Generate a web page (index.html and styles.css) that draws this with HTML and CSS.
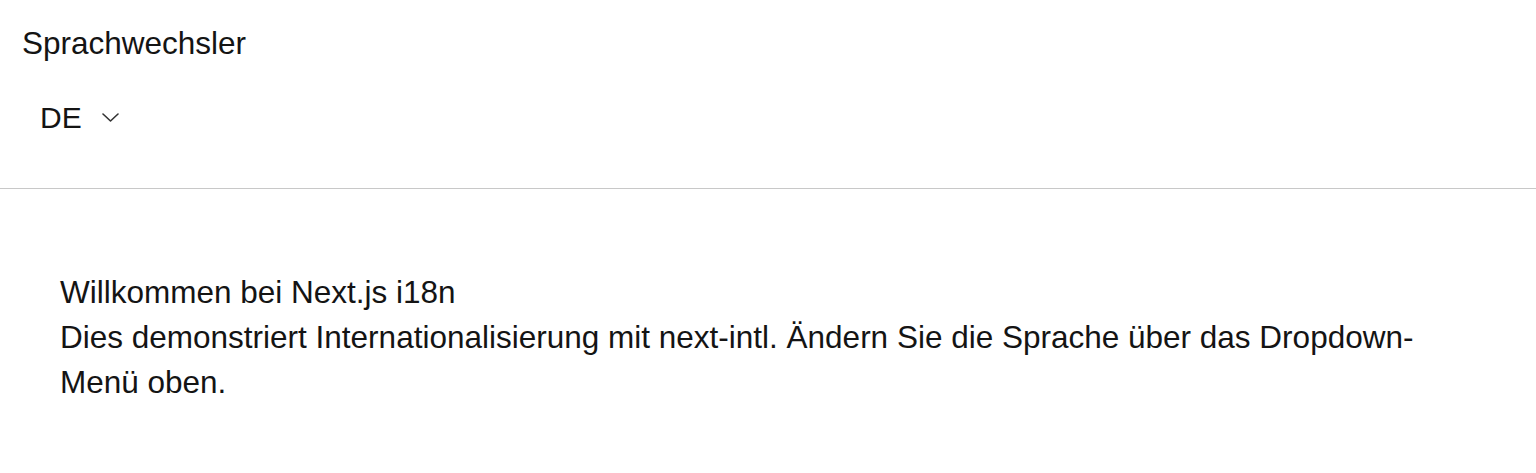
FILE: index.html
```html
<!DOCTYPE html>
<html lang="de">
<head>
<meta charset="utf-8">
<title>Next.js i18n</title>
<link rel="stylesheet" href="styles.css">
</head>
<body>
<header class="topbar">
  <div class="topbar-title">Sprachwechsler</div>
  <button class="lang-select" type="button">
    <span class="lang-code">DE</span>
    <svg class="chevron" width="17" height="9" viewBox="0 0 17 9" aria-hidden="true">
      <path d="M1 1 L8.5 8 L16 1" fill="none" stroke="#333" stroke-width="1.6" stroke-linecap="round" stroke-linejoin="round"/>
    </svg>
  </button>
</header>
<main class="content">
  <div class="welcome">Willkommen bei Next.js i18n</div>
  <p class="intro">Dies demonstriert Internationalisierung mit next-intl. Ändern Sie die Sprache über das Dropdown-Menü oben.</p>
</main>
</body>
</html>
```
FILE: styles.css
```css
* { box-sizing: border-box; }
html, body {
  margin: 0;
  padding: 0;
  background: #ffffff;
}
body {
  font-family: "Liberation Sans", Arial, Helvetica, sans-serif;
  font-size: 31.5px;
  line-height: 45px;
  color: #141414;
}
.topbar {
  display: flex;
  flex-direction: column;
  align-items: flex-start;
  gap: 29px;
  padding: 21px 0 48px 22px;
  border-bottom: 1px solid #c8c8c8;
}
.lang-select {
  display: flex;
  align-items: center;
  gap: 20px;
  margin-left: 18px;
  padding: 0;
  border: none;
  background: transparent;
  font: inherit;
  font-size: 30px;
  color: inherit;
  cursor: pointer;
}
.chevron {
  display: block;
}
.content {
  padding: 81px 60px 0 60px;
}
.welcome {
  margin: 0;
}
.intro {
  margin: 0;
}
```
